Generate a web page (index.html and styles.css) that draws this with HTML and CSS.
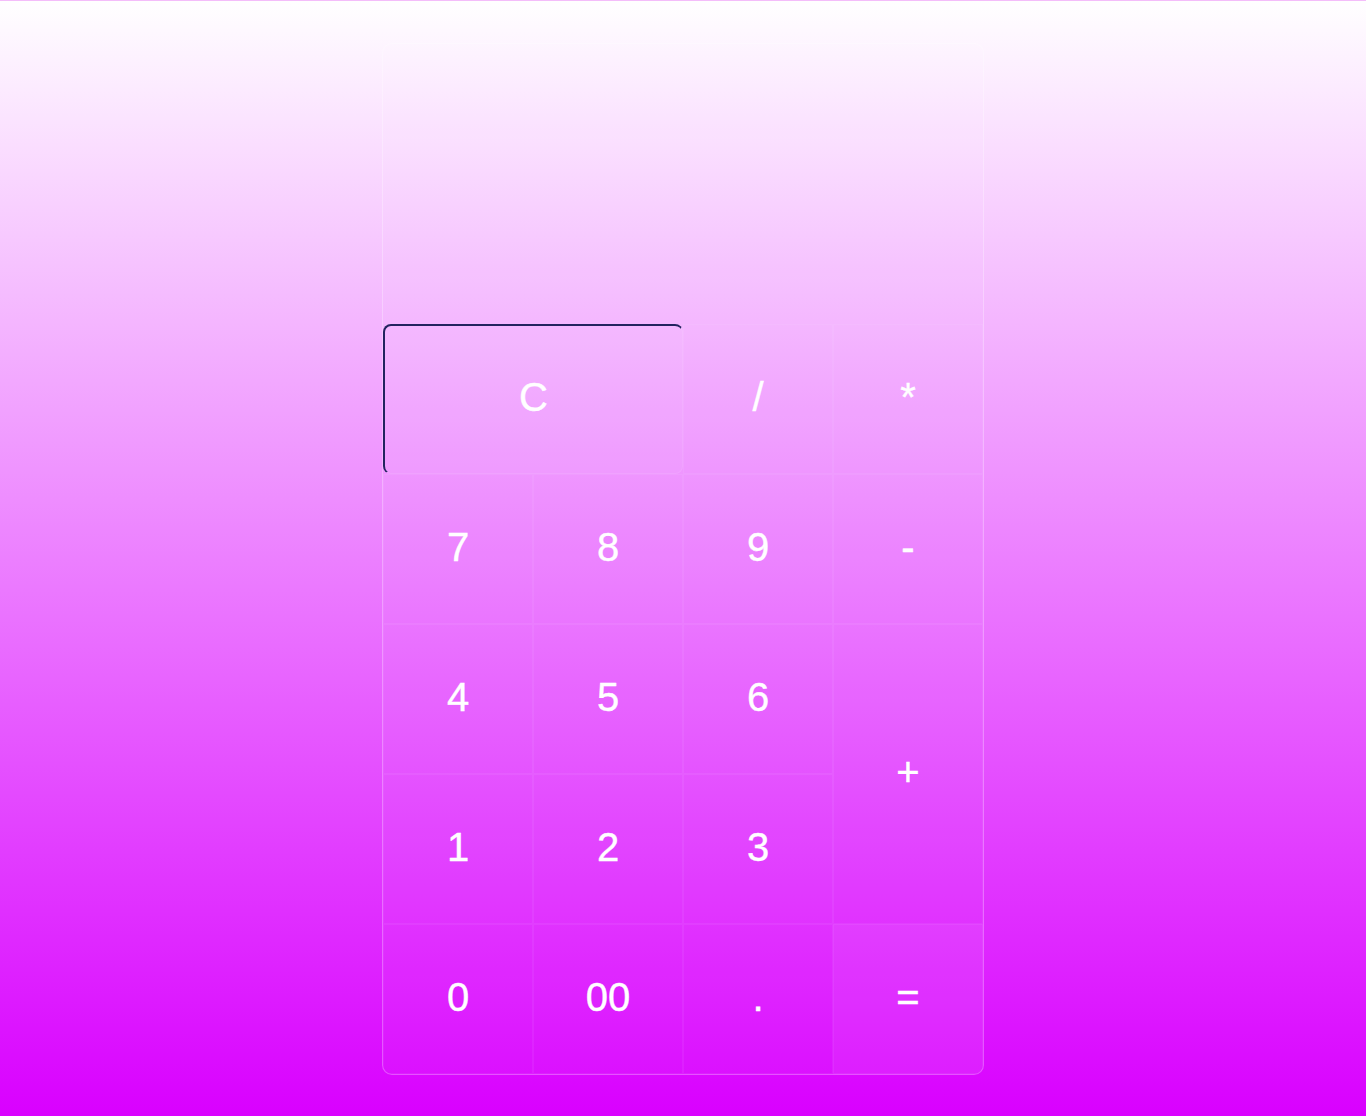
FILE: index.html
```html
<!DOCTYPE html>
<html lang="en">
<head>
<meta charset="utf-8">
<title>Calculator</title>
<link rel="stylesheet" href="styles.css">
</head>
<body>
<div class="topline"></div>
<main class="calc">
  <div class="display"></div>
  <div class="keys">
    <button class="key key-clear">C</button>
    <button class="key">/</button>
    <button class="key">*</button>
    <button class="key">7</button>
    <button class="key">8</button>
    <button class="key">9</button>
    <button class="key">-</button>
    <button class="key">4</button>
    <button class="key">5</button>
    <button class="key">6</button>
    <button class="key key-plus">+</button>
    <button class="key">1</button>
    <button class="key">2</button>
    <button class="key">3</button>
    <button class="key">0</button>
    <button class="key">00</button>
    <button class="key">.</button>
    <button class="key key-eq">=</button>
  </div>
</main>
</body>
</html>
```

FILE: styles.css
```css
html, body {
  margin: 0;
  padding: 0;
}
body {
  min-height: 1116px;
  background: linear-gradient(to bottom, #ffffff 0%, #d900ff 100%);
  font-family: "Liberation Sans", Arial, sans-serif;
  display: flex;
  flex-direction: column;
  align-items: center;
}
.topline {
  align-self: stretch;
  height: 1px;
  background: #f4bdfa;
}
.calc {
  margin-top: 42px;
  width: 600px;
  border: 1px solid rgba(255, 255, 255, 0.28);
  border-radius: 10px;
  background: rgba(255, 255, 255, 0.03);
  overflow: hidden;
}
.display {
  height: 280px;
}
.keys {
  display: grid;
  grid-template-columns: repeat(4, 1fr);
  grid-auto-rows: 150px;
}
.key {
  box-sizing: border-box;
  border: 1px solid rgba(255, 255, 255, 0.06);
  background: transparent;
  color: #ffffff;
  font-family: "Liberation Sans", Arial, sans-serif;
  font-size: 40px;
  padding: 0 0 4px 0;
  margin: 0;
  cursor: pointer;
  -webkit-text-stroke: 0.4px #ffffff;
}
.key-clear {
  grid-column: span 2;
  border-radius: 8px;
  border-top: 2px solid #22235f;
  border-left: 2px solid #22235f;
  border-right: 1px solid rgba(255, 255, 255, 0.08);
  border-bottom: 1px solid rgba(255, 255, 255, 0.08);
  background: rgba(255, 255, 255, 0.04);
}
.key-plus {
  grid-row: span 2;
  grid-column: 4;
}
.key-eq {
  background: rgba(255, 255, 255, 0.06);
}
```
